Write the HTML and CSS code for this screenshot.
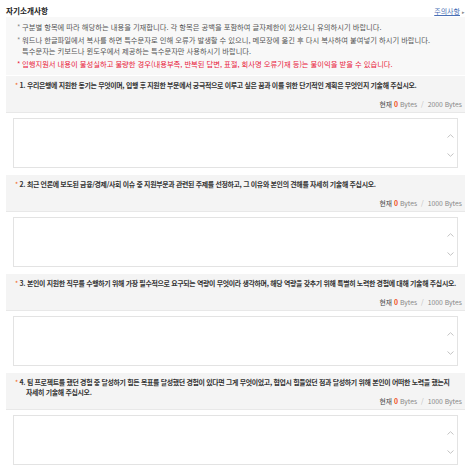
FILE: index.html
```html
<!DOCTYPE html>
<html lang="ko">
<head>
    <meta charset="UTF-8">
    <meta name="viewport" content="width=device-width, initial-scale=1.0">
    <title>자기소개사항</title>
    <link rel="stylesheet" href="styles.css">
</head>
<body>
    <div class="container">
        <div class="title-row">
            <h1>자기소개사항</h1>
            <a href="#" class="notice-link">주의사항</a>
        </div>
        <ul class="notice">
            <li>구분별 항목에 따라 해당하는 내용을 기재합니다. 각 항목은 공백을 포함하여 글자제한이 있사오니 유의하시기 바랍니다.</li>
            <li>워드나 한글파일에서 복사를 하면 특수문자로 인해 오류가 발생할 수 있으니, 메모장에 옮긴 후 다시 복사하여 붙여넣기 하시기 바랍니다.<br>특수문자는 키보드나 윈도우에서 제공하는 특수문자만 사용하시기 바랍니다.</li>
            <li class="warn">입행지원서 내용이 불성실하고 불량한 경우(내용부족, 반복된 답변, 표절, 회사명 오류기재 등)는 불이익을 받을 수 있습니다.</li>
        </ul>

        <div class="question">
            <div class="q-head">
                <p class="q-text"><span class="star">*</span> 1. 우리은행에 지원한 동기는 무엇이며, 입행 후 지원한 부문에서 궁극적으로 이루고 싶은 꿈과 이를 위한 단기적인 계획은 무엇인지 기술해 주십시오.</p>
                <div class="bytes">현재 <b>0</b> <span>Bytes</span> <i>/</i> <span>2000 Bytes</span></div>
            </div>
            <div class="answer">
                <textarea></textarea>
                <div class="scroll">
                    <svg width="7" height="4" viewBox="0 0 7 4"><path d="M0.5 3.5L3.5 0.7L6.5 3.5" fill="none" stroke="#c4c4c4" stroke-width="1"/></svg>
                    <svg width="7" height="4" viewBox="0 0 7 4"><path d="M0.5 0.5L3.5 3.3L6.5 0.5" fill="none" stroke="#c4c4c4" stroke-width="1"/></svg>
                </div>
            </div>
        </div>

        <div class="question">
            <div class="q-head">
                <p class="q-text"><span class="star">*</span> 2. 최근 언론에 보도된 금융/경제/사회 이슈 중 지원부문과 관련된 주제를 선정하고, 그 이유와 본인의 견해를 자세히 기술해 주십시오.</p>
                <div class="bytes">현재 <b>0</b> <span>Bytes</span> <i>/</i> <span>1000 Bytes</span></div>
            </div>
            <div class="answer">
                <textarea></textarea>
                <div class="scroll">
                    <svg width="7" height="4" viewBox="0 0 7 4"><path d="M0.5 3.5L3.5 0.7L6.5 3.5" fill="none" stroke="#c4c4c4" stroke-width="1"/></svg>
                    <svg width="7" height="4" viewBox="0 0 7 4"><path d="M0.5 0.5L3.5 3.3L6.5 0.5" fill="none" stroke="#c4c4c4" stroke-width="1"/></svg>
                </div>
            </div>
        </div>

        <div class="question">
            <div class="q-head">
                <p class="q-text"><span class="star">*</span> 3. 본인이 지원한 직무를 수행하기 위해 가장 필수적으로 요구되는 역량이 무엇이라 생각하며, 해당 역량을 갖추기 위해 특별히 노력한 경험에 대해 기술해 주십시오.</p>
                <div class="bytes">현재 <b>0</b> <span>Bytes</span> <i>/</i> <span>1000 Bytes</span></div>
            </div>
            <div class="answer">
                <textarea></textarea>
                <div class="scroll">
                    <svg width="7" height="4" viewBox="0 0 7 4"><path d="M0.5 3.5L3.5 0.7L6.5 3.5" fill="none" stroke="#c4c4c4" stroke-width="1"/></svg>
                    <svg width="7" height="4" viewBox="0 0 7 4"><path d="M0.5 0.5L3.5 3.3L6.5 0.5" fill="none" stroke="#c4c4c4" stroke-width="1"/></svg>
                </div>
            </div>
        </div>

        <div class="question">
            <div class="q-head">
                <p class="q-text"><span class="star">*</span> 4. 팀 프로젝트를 했던 경험 중 달성하기 힘든 목표를 달성했던 경험이 있다면 그게 무엇이었고, 협업시 힘들었던 점과 달성하기 위해 본인이 어떠한 노력을 했는지 자세히 기술해 주십시오.</p>
                <div class="bytes">현재 <b>0</b> <span>Bytes</span> <i>/</i> <span>1000 Bytes</span></div>
            </div>
            <div class="answer">
                <textarea></textarea>
                <div class="scroll">
                    <svg width="7" height="4" viewBox="0 0 7 4"><path d="M0.5 3.5L3.5 0.7L6.5 3.5" fill="none" stroke="#c4c4c4" stroke-width="1"/></svg>
                    <svg width="7" height="4" viewBox="0 0 7 4"><path d="M0.5 0.5L3.5 3.3L6.5 0.5" fill="none" stroke="#c4c4c4" stroke-width="1"/></svg>
                </div>
            </div>
        </div>
    </div>
</body>
</html>
```

FILE: styles.css
```css
body {
    margin: 0;
    background-color: #fff;
    color: #555;
    font-family: "Noto Sans CJK KR", "Noto Sans", sans-serif;
    font-size: 7.3px;
}
.container {
    padding: 4px 9px 0 6px;
}
.title-row {
    display: flex;
    justify-content: space-between;
    align-items: center;
    height: 13px;
}
h1 {
    margin: 0;
    font-size: 7.6px;
    font-weight: bold;
    color: #222;
}
.notice-link {
    color: #4a6fb5;
    font-size: 7px;
    margin-right: 0;
}
.notice-link::after {
    content: "\25B8";
    display: inline-block;
    margin-left: 2px;
    color: #888;
    font-size: 5px;
}
.notice {
    list-style: none;
    margin: 0;
    padding: 4.5px 6px 5.5px 16px;
    background-color: #f8f8f8;
    line-height: 11px;
}
.notice li {
    position: relative;
    margin-top: 2px;
}
.notice li:first-child {
    margin-top: 0;
}
.notice li::before {
    content: "*";
    position: absolute;
    left: -5px;
    top: 0;
    color: #888;
}
.notice li.warn {
    color: #e8203a;
}
.notice li.warn::before {
    color: #e8203a;
}
.question {
    margin-top: 1px;
    padding-bottom: 6px;
}
.q-head {
    background-color: #f4f4f4;
    border-bottom: 1px solid #e8e8e8;
    padding: 4px 3px 3px 9px;
    height: 37px;
    box-sizing: border-box;
}
.q-text {
    margin: 0;
    padding-left: 11px;
    text-indent: -11px;
    min-height: 20px;
    line-height: 10px;
    font-size: 6.9px;
    font-weight: bold;
    color: #333;
    letter-spacing: -0.3px;
    word-break: keep-all;
}
.q-text .star {
    color: #f26522;
    font-weight: normal;
}
.bytes {
    text-align: right;
    line-height: 9px;
    color: #444;
    font-size: 6.8px;
}
.bytes b {
    color: #f04e23;
}
.bytes span {
    color: #888;
}
.bytes i {
    font-style: normal;
    color: #bbb;
    margin: 0 2px;
}
.answer {
    display: flex;
    margin: 5px 7px 0 7px;
    height: 50px;
    border: 1px solid #e3e3e3;
    box-sizing: border-box;
    background-color: #fff;
}
.answer textarea {
    flex: 1;
    border: none;
    resize: none;
    outline: none;
    background: none;
    padding: 4px;
}
.scroll {
    width: 14px;
    display: flex;
    flex-direction: column;
    justify-content: space-between;
    align-items: center;
    padding: 15px 0 10px 0;
    box-sizing: border-box;
}
.scroll svg {
    display: block;
}
```
